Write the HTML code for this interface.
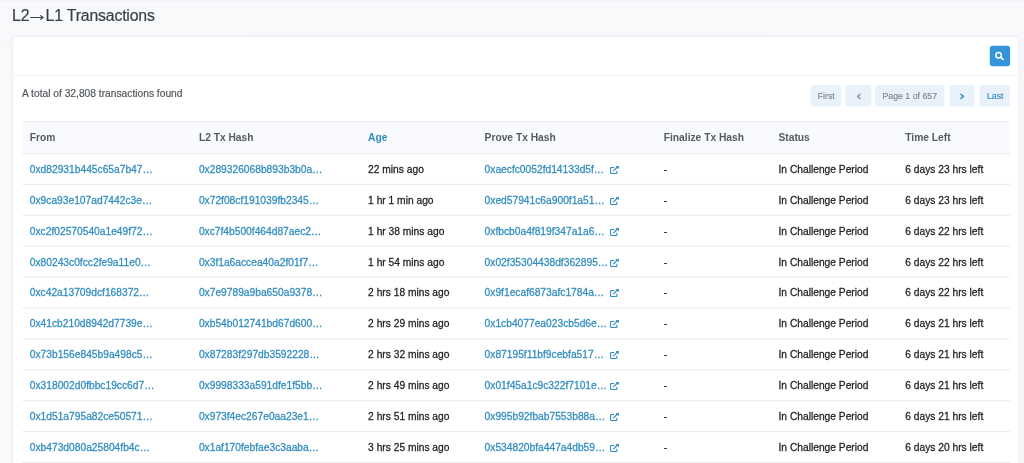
<!DOCTYPE html>
<html><head><meta charset="utf-8"><title>L2→L1 Transactions</title>
<style>
*{box-sizing:border-box;margin:0;padding:0}
html,body{width:1024px;height:463px;overflow:hidden;background:#f8f9fb;font-family:"Liberation Sans",Arial,sans-serif;color:#1e2022}
body{position:relative}
h1,.total,.pg,.r{will-change:transform}
#bg{position:absolute;left:0;top:0;width:1024px;height:463px}
h1{position:absolute;left:12.4px;top:6.2px;font-size:15.8px;letter-spacing:-.16px;-webkit-text-stroke:.2px #3a3e44;font-weight:400;color:#3a3e44;line-height:20px;white-space:nowrap}
h1 i{font-style:normal;display:inline-block;transform:translateY(-1.9px) scale(1.46,1.35);margin:0 0.6px 0 0.1px;-webkit-text-stroke:0}
.total{position:absolute;left:22.2px;top:87.5px;font-size:10.24px;color:#50555b;-webkit-text-stroke:.18px;line-height:12px;white-space:nowrap}
.pg{position:absolute;top:85px;height:21.5px;font-size:8.78px;line-height:23px;text-align:center;color:#7d8791;white-space:nowrap;-webkit-text-stroke:.15px}
.pg.a{color:#318dbf}
.r{position:absolute;left:0;width:1024px;font-size:10.24px;white-space:nowrap;-webkit-text-stroke:.27px}
.r span,.r a{position:absolute;top:0;line-height:inherit}
.h{font-weight:700;color:#555a61;-webkit-text-stroke:0}
a{color:#318dbf;text-decoration:none}
.s{color:#318dbf}
.r svg{position:absolute;left:609.8px;width:9px;height:8px}
</style></head><body>
<svg id="bg" viewBox="0 0 1024 463">
<defs><filter id="sh" x="-2%" y="-5%" width="104%" height="110%"><feGaussianBlur stdDeviation="2.5"/></filter></defs>
<rect x="0" y="0" width="1024" height="2.8" fill="#f5f6f8"/><rect x="0" y="2.8" width="1024" height="3" fill="#fafbfc"/>
<rect x="12.5" y="37" width="1006.5" height="440" rx="4" fill="#c9d0dc" opacity=".28" filter="url(#sh)"/>
<rect x="12.5" y="36.5" width="1006.5" height="440" rx="4" fill="#eef0f4"/>
<rect x="13.2" y="37.2" width="1005.2" height="440" rx="3.5" fill="#fff"/>
<rect x="13.2" y="75" width="1005.2" height="1" fill="#f2f4f7"/>
<rect x="989.8" y="45.8" width="20.3" height="20.4" rx="3" fill="#3494da"/>
<circle cx="998.6" cy="55.3" r="2.75" fill="none" stroke="#fff" stroke-width="1.5"/><path d="M1000.7 57.4L1003.1 59.3" stroke="#fff" stroke-width="1.7" stroke-linecap="round"/>
<rect x="810.5" y="85" width="30.5" height="21.5" rx="3.5" fill="#e9f2fa"/>
<rect x="845.5" y="85" width="26" height="21.5" rx="3.5" fill="#e9f2fa"/>
<rect x="875" y="85" width="69.5" height="21.5" rx="3.5" fill="#e9f2fa"/>
<rect x="949.5" y="85" width="25" height="21.5" rx="3.5" fill="#e9f2fa"/>
<rect x="979.5" y="85" width="30.5" height="21.5" rx="3.5" fill="#e9f2fa"/>
<path d="M860.2 94.3L857.5 96.4L860.2 98.5" fill="none" stroke="#8a949e" stroke-width="1.35" stroke-linejoin="round" stroke-linecap="round"/>
<path d="M960.8 94.3L963.5 96.4L960.8 98.5" fill="none" stroke="#318dbf" stroke-width="1.4" stroke-linejoin="round" stroke-linecap="round"/>
<rect x="22.5" y="121.5" width="987.5" height="32.0" fill="#f8fafd"/>
<rect x="22.5" y="121.0" width="987.5" height="1" fill="#ececef"/>
<rect x="22.5" y="153.00" width="987.5" height="1" fill="#ececef"/>
<rect x="22.5" y="183.90" width="987.5" height="1" fill="#ececef"/>
<rect x="22.5" y="214.80" width="987.5" height="1" fill="#ececef"/>
<rect x="22.5" y="245.70" width="987.5" height="1" fill="#ececef"/>
<rect x="22.5" y="276.60" width="987.5" height="1" fill="#ececef"/>
<rect x="22.5" y="307.50" width="987.5" height="1" fill="#ececef"/>
<rect x="22.5" y="338.40" width="987.5" height="1" fill="#ececef"/>
<rect x="22.5" y="369.30" width="987.5" height="1" fill="#ececef"/>
<rect x="22.5" y="400.20" width="987.5" height="1" fill="#ececef"/>
<rect x="22.5" y="431.10" width="987.5" height="1" fill="#ececef"/>
<rect x="22.5" y="462.00" width="987.5" height="1" fill="#ececef"/>
</svg>
<h1>L2<i>→</i>L1 Transactions</h1>
<div class="total">A total of 32,808 transactions found</div>
<div class="pg" style="left:810.5px;width:30.5px">First</div>
<div class="pg" style="left:875px;width:69.5px">Page 1 of 657</div>
<div class="pg a" style="left:979.5px;width:30.5px">Last</div>
<div class="r h" style="top:122.0px;height:32.0px;line-height:32.0px"><span class="" style="left:29.8px">From</span><span class="" style="left:198.9px">L2 Tx Hash</span><span class="s" style="left:368.1px">Age</span><span class="" style="left:484.6px">Prove Tx Hash</span><span class="" style="left:663.75px">Finalize Tx Hash</span><span class="" style="left:778.5px">Status</span><span class="" style="left:905.3px">Time Left</span></div>
<div class="r" style="top:155.25px;height:30.9px;line-height:30.9px"><a style="left:29.8px">0xd82931b445c65a7b47…</a><a style="left:198.9px">0x289326068b893b3b0a…</a><span style="left:368.1px">22 mins ago</span><a style="left:484.6px">0xaecfc0052fd14133d5f…</a><svg viewBox="0 0 9 8" style="top:10.85px"><path d="M4.3 1.5H1.3a.7.7 0 0 0-.7.7V6.8a.7.7 0 0 0 .7.7H6.2a.7.7 0 0 0 .7-.7V4.7" fill="none" stroke="#318dbf" stroke-width="1.1"/><path d="M3.2 5.1L7.6 1" stroke="#318dbf" stroke-width="1.2"/><path d="M5.5 0H8.9V3.3Z" fill="#318dbf"/></svg><span style="left:663.75px">-</span><span style="left:778.5px">In Challenge Period</span><span style="left:905.3px">6 days 23 hrs left</span></div>
<div class="r" style="top:186.25px;height:30.9px;line-height:30.9px"><a style="left:29.8px">0x9ca93e107ad7442c3e…</a><a style="left:198.9px">0x72f08cf191039fb2345…</a><span style="left:368.1px">1 hr 1 min ago</span><a style="left:484.6px">0xed57941c6a900f1a51…</a><svg viewBox="0 0 9 8" style="top:10.85px"><path d="M4.3 1.5H1.3a.7.7 0 0 0-.7.7V6.8a.7.7 0 0 0 .7.7H6.2a.7.7 0 0 0 .7-.7V4.7" fill="none" stroke="#318dbf" stroke-width="1.1"/><path d="M3.2 5.1L7.6 1" stroke="#318dbf" stroke-width="1.2"/><path d="M5.5 0H8.9V3.3Z" fill="#318dbf"/></svg><span style="left:663.75px">-</span><span style="left:778.5px">In Challenge Period</span><span style="left:905.3px">6 days 23 hrs left</span></div>
<div class="r" style="top:217.25px;height:30.9px;line-height:30.9px"><a style="left:29.8px">0xc2f02570540a1e49f72…</a><a style="left:198.9px">0xc7f4b500f464d87aec2…</a><span style="left:368.1px">1 hr 38 mins ago</span><a style="left:484.6px">0xfbcb0a4f819f347a1a6…</a><svg viewBox="0 0 9 8" style="top:10.85px"><path d="M4.3 1.5H1.3a.7.7 0 0 0-.7.7V6.8a.7.7 0 0 0 .7.7H6.2a.7.7 0 0 0 .7-.7V4.7" fill="none" stroke="#318dbf" stroke-width="1.1"/><path d="M3.2 5.1L7.6 1" stroke="#318dbf" stroke-width="1.2"/><path d="M5.5 0H8.9V3.3Z" fill="#318dbf"/></svg><span style="left:663.75px">-</span><span style="left:778.5px">In Challenge Period</span><span style="left:905.3px">6 days 22 hrs left</span></div>
<div class="r" style="top:248.25px;height:30.9px;line-height:30.9px"><a style="left:29.8px">0x80243c0fcc2fe9a11e0…</a><a style="left:198.9px">0x3f1a6accea40a2f01f7…</a><span style="left:368.1px">1 hr 54 mins ago</span><a style="left:484.6px">0x02f35304438df362895…</a><svg viewBox="0 0 9 8" style="top:10.85px"><path d="M4.3 1.5H1.3a.7.7 0 0 0-.7.7V6.8a.7.7 0 0 0 .7.7H6.2a.7.7 0 0 0 .7-.7V4.7" fill="none" stroke="#318dbf" stroke-width="1.1"/><path d="M3.2 5.1L7.6 1" stroke="#318dbf" stroke-width="1.2"/><path d="M5.5 0H8.9V3.3Z" fill="#318dbf"/></svg><span style="left:663.75px">-</span><span style="left:778.5px">In Challenge Period</span><span style="left:905.3px">6 days 22 hrs left</span></div>
<div class="r" style="top:278.25px;height:30.9px;line-height:30.9px"><a style="left:29.8px">0xc42a13709dcf168372…</a><a style="left:198.9px">0x7e9789a9ba650a9378…</a><span style="left:368.1px">2 hrs 18 mins ago</span><a style="left:484.6px">0x9f1ecaf6873afc1784a…</a><svg viewBox="0 0 9 8" style="top:10.85px"><path d="M4.3 1.5H1.3a.7.7 0 0 0-.7.7V6.8a.7.7 0 0 0 .7.7H6.2a.7.7 0 0 0 .7-.7V4.7" fill="none" stroke="#318dbf" stroke-width="1.1"/><path d="M3.2 5.1L7.6 1" stroke="#318dbf" stroke-width="1.2"/><path d="M5.5 0H8.9V3.3Z" fill="#318dbf"/></svg><span style="left:663.75px">-</span><span style="left:778.5px">In Challenge Period</span><span style="left:905.3px">6 days 22 hrs left</span></div>
<div class="r" style="top:309.25px;height:30.9px;line-height:30.9px"><a style="left:29.8px">0x41cb210d8942d7739e…</a><a style="left:198.9px">0xb54b012741bd67d600…</a><span style="left:368.1px">2 hrs 29 mins ago</span><a style="left:484.6px">0x1cb4077ea023cb5d6e…</a><svg viewBox="0 0 9 8" style="top:10.85px"><path d="M4.3 1.5H1.3a.7.7 0 0 0-.7.7V6.8a.7.7 0 0 0 .7.7H6.2a.7.7 0 0 0 .7-.7V4.7" fill="none" stroke="#318dbf" stroke-width="1.1"/><path d="M3.2 5.1L7.6 1" stroke="#318dbf" stroke-width="1.2"/><path d="M5.5 0H8.9V3.3Z" fill="#318dbf"/></svg><span style="left:663.75px">-</span><span style="left:778.5px">In Challenge Period</span><span style="left:905.3px">6 days 21 hrs left</span></div>
<div class="r" style="top:340.25px;height:30.9px;line-height:30.9px"><a style="left:29.8px">0x73b156e845b9a498c5…</a><a style="left:198.9px">0x87283f297db3592228…</a><span style="left:368.1px">2 hrs 32 mins ago</span><a style="left:484.6px">0x87195f11bf9cebfa517…</a><svg viewBox="0 0 9 8" style="top:10.85px"><path d="M4.3 1.5H1.3a.7.7 0 0 0-.7.7V6.8a.7.7 0 0 0 .7.7H6.2a.7.7 0 0 0 .7-.7V4.7" fill="none" stroke="#318dbf" stroke-width="1.1"/><path d="M3.2 5.1L7.6 1" stroke="#318dbf" stroke-width="1.2"/><path d="M5.5 0H8.9V3.3Z" fill="#318dbf"/></svg><span style="left:663.75px">-</span><span style="left:778.5px">In Challenge Period</span><span style="left:905.3px">6 days 21 hrs left</span></div>
<div class="r" style="top:371.25px;height:30.9px;line-height:30.9px"><a style="left:29.8px">0x318002d0fbbc19cc6d7…</a><a style="left:198.9px">0x9998333a591dfe1f5bb…</a><span style="left:368.1px">2 hrs 49 mins ago</span><a style="left:484.6px">0x01f45a1c9c322f7101e…</a><svg viewBox="0 0 9 8" style="top:10.85px"><path d="M4.3 1.5H1.3a.7.7 0 0 0-.7.7V6.8a.7.7 0 0 0 .7.7H6.2a.7.7 0 0 0 .7-.7V4.7" fill="none" stroke="#318dbf" stroke-width="1.1"/><path d="M3.2 5.1L7.6 1" stroke="#318dbf" stroke-width="1.2"/><path d="M5.5 0H8.9V3.3Z" fill="#318dbf"/></svg><span style="left:663.75px">-</span><span style="left:778.5px">In Challenge Period</span><span style="left:905.3px">6 days 21 hrs left</span></div>
<div class="r" style="top:402.25px;height:30.9px;line-height:30.9px"><a style="left:29.8px">0x1d51a795a82ce50571…</a><a style="left:198.9px">0x973f4ec267e0aa23e1…</a><span style="left:368.1px">2 hrs 51 mins ago</span><a style="left:484.6px">0x995b92fbab7553b88a…</a><svg viewBox="0 0 9 8" style="top:10.85px"><path d="M4.3 1.5H1.3a.7.7 0 0 0-.7.7V6.8a.7.7 0 0 0 .7.7H6.2a.7.7 0 0 0 .7-.7V4.7" fill="none" stroke="#318dbf" stroke-width="1.1"/><path d="M3.2 5.1L7.6 1" stroke="#318dbf" stroke-width="1.2"/><path d="M5.5 0H8.9V3.3Z" fill="#318dbf"/></svg><span style="left:663.75px">-</span><span style="left:778.5px">In Challenge Period</span><span style="left:905.3px">6 days 21 hrs left</span></div>
<div class="r" style="top:433.25px;height:30.9px;line-height:30.9px"><a style="left:29.8px">0xb473d080a25804fb4c…</a><a style="left:198.9px">0x1af170febfae3c3aaba…</a><span style="left:368.1px">3 hrs 25 mins ago</span><a style="left:484.6px">0x534820bfa447a4db59…</a><svg viewBox="0 0 9 8" style="top:10.85px"><path d="M4.3 1.5H1.3a.7.7 0 0 0-.7.7V6.8a.7.7 0 0 0 .7.7H6.2a.7.7 0 0 0 .7-.7V4.7" fill="none" stroke="#318dbf" stroke-width="1.1"/><path d="M3.2 5.1L7.6 1" stroke="#318dbf" stroke-width="1.2"/><path d="M5.5 0H8.9V3.3Z" fill="#318dbf"/></svg><span style="left:663.75px">-</span><span style="left:778.5px">In Challenge Period</span><span style="left:905.3px">6 days 20 hrs left</span></div>
</body></html>
